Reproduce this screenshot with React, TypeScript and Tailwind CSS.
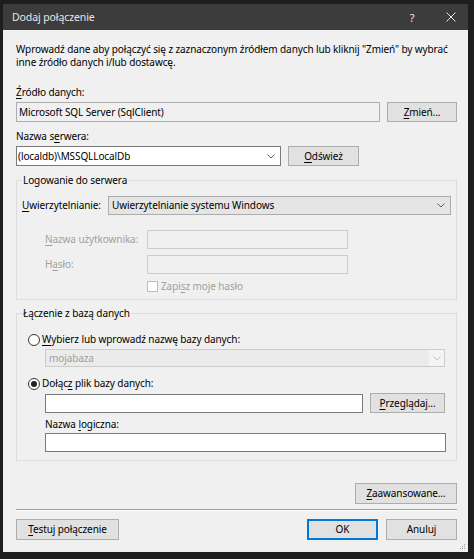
import React from "react";

function U({ children }: { children: React.ReactNode }) {
  return <span className="underline underline-offset-[1.5px] decoration-[1px]">{children}</span>;
}

function Btn({ children, className }: { children: React.ReactNode; className: string }) {
  return (
    <div className={"flex items-center justify-center bg-[#e1e1e1] border border-[#adadad] text-black " + className}>
      <span>{children}</span>
    </div>
  );
}

function Chevron({ color }: { color: string }) {
  return (
    <svg width="8" height="5" viewBox="0 0 8 5" className="shrink-0">
      <path d="M0.5 0.5 L4 4 L7.5 0.5" fill="none" stroke={color} strokeWidth="1" />
    </svg>
  );
}

export default function App() {
  return (
    <div className="w-[474px] h-[559px] bg-[#1e1e1e] pt-[4px] pl-[3px] font-['Noto_Sans',sans-serif] text-[10px] leading-[13px] tracking-[-0.1px] text-black overflow-hidden">
      <div className="relative w-[465px] h-[548px] flex flex-col">
        {/* Title bar */}
        <div className="h-[26px] bg-[#3c3c3c] flex items-center pl-[9px] pr-[7px] text-[#e6e6e6] text-[10.5px]">
          <span>Dodaj połączenie</span>
          <span className="ml-auto w-[20px] text-center text-[11px]">?</span>
          <div className="ml-[19px] w-[20px] flex items-center justify-center">
            <svg width="10" height="10" viewBox="0 0 10 10">
              <path d="M0.5 0.5 L9.5 9.5 M9.5 0.5 L0.5 9.5" stroke="#e6e6e6" strokeWidth="1" />
            </svg>
          </div>
        </div>

        {/* Body */}
        <div className="flex-1 bg-[#f0f0f0] pl-[13px] pr-[11px] pt-[13px] flex flex-col">
          <p className="leading-[12.5px] whitespace-nowrap">
            Wprowadź dane aby połączyć się z zaznaczonym źródłem danych lub kliknij "Zmień" by wybrać
            <br />
            inne źródło danych i/lub dostawcę.
          </p>

          <div className="mt-[18px]">
            <U>Ź</U>ródło danych:
          </div>
          <div className="mt-[3px] flex h-[20px]">
            <div className="w-[364px] h-[20px] border border-[#adadad] bg-[#f0f0f0] flex items-center pl-[2px]">
              Microsoft SQL Server (SqlClient)
            </div>
            <Btn className="ml-auto w-[70px] h-[20px]">
              <U>Z</U>mień...
            </Btn>
          </div>

          <div className="mt-[8px]">
            Nazwa s<U>e</U>rwera:
          </div>
          <div className="mt-[3px] flex h-[20px]">
            <div className="w-[265px] h-[20px] border border-[#7a7a7a] bg-white flex items-center pl-[1px] pr-[5px]">
              <span>(localdb)\MSSQLLocalDb</span>
              <span className="ml-auto">
                <Chevron color="#606060" />
              </span>
            </div>
            <Btn className="ml-[7px] w-[71px] h-[20px]">
              <U>O</U>dśwież
            </Btn>
          </div>

          {/* Group 1 */}
          <fieldset className="mt-[8px] border border-[#dcdcdc] pl-[5px] pr-[5px] pb-[7px] min-w-0">
            <legend className="px-[1px]">Logowanie do serwera</legend>
            <div className="mt-[9px] h-[19px] flex items-center">
              <div className="w-[86px]">
                <U>U</U>wierzytelnianie:
              </div>
              <div className="flex-1 h-[19px] bg-[#e5e5e5] border border-[#acacac] flex items-center pl-[3px] pr-[5px]">
                <span>Uwierzytelnianie systemu Windows</span>
                <span className="ml-auto">
                  <Chevron color="#606060" />
                </span>
              </div>
            </div>
            <div className="mt-[15px] h-[19px] flex items-center text-[#a0a0a0]">
              <div className="w-[125px] pl-[23px]">
                <U>N</U>azwa użytkownika:
              </div>
              <div className="w-[201px] h-[19px] border border-[#cccccc] bg-[#f0f0f0]" />
            </div>
            <div className="mt-[6px] h-[19px] flex items-center text-[#a0a0a0]">
              <div className="w-[125px] pl-[23px]">
                H<U>a</U>sło:
              </div>
              <div className="w-[201px] h-[19px] border border-[#cccccc] bg-[#f0f0f0]" />
            </div>
            <div className="mt-[7px] h-[11px] flex items-center pl-[125px] text-[#a0a0a0]">
              <div className="w-[11px] h-[11px] border border-[#bcbcbc] bg-white shrink-0" />
              <span className="ml-[3px]">
                Zapi<U>s</U>z moje hasło
              </span>
            </div>
          </fieldset>

          {/* Group 2 */}
          <fieldset className="mt-[7px] border border-[#dcdcdc] pl-[5px] pr-[5px] pb-[8px] min-w-0">
            <legend className="px-[1px]">Łączenie z bazą danych</legend>
            <div className="mt-[13px] h-[13px] flex items-center pl-[6px]">
              <div className="w-[12px] h-[12px] rounded-full border border-[#333333] bg-white shrink-0" />
              <span className="ml-[2px]">
                <U>W</U>ybierz lub wprowadź nazwę bazy danych:
              </span>
            </div>
            <div className="mt-[3px] ml-[23px] w-[400px] h-[18px] border border-[#cccccc] bg-[#ebebeb] flex items-center text-[#a0a0a0]">
              <span className="pl-[3px]">mojabaza</span>
              <div className="ml-auto w-[15px] h-full bg-[#f4f4f4] flex items-center justify-center">
                <Chevron color="#c0c0c0" />
              </div>
            </div>
            <div className="mt-[10px] h-[13px] flex items-center pl-[6px]">
              <div className="w-[12px] h-[12px] rounded-full border border-[#333333] bg-white shrink-0 flex items-center justify-center">
                <div className="w-[6px] h-[6px] rounded-full bg-[#222222]" />
              </div>
              <span className="ml-[2px]">
                Dołąc<U>z</U> plik bazy danych:
              </span>
            </div>
            <div className="mt-[3px] ml-[23px] w-[400px] h-[20px] flex items-end">
              <div className="w-[318px] h-[19px] border border-[#7a7a7a] bg-white" />
              <Btn className="ml-auto w-[75px] h-[20px]">
                <U>P</U>rzeglądaj...
              </Btn>
            </div>
            <div className="mt-[5px] ml-[23px]">
              Nazwa <U>l</U>ogiczna:
            </div>
            <div className="mt-[2px] ml-[23px] w-[401px] h-[19px] border border-[#7a7a7a] bg-white" />
          </fieldset>

          <Btn className="mt-[22px] self-end w-[102px] h-[21px]">
            <U>Z</U>aawansowane...
          </Btn>

          <div className="mt-[5px] h-[2px] border-t border-t-[#a0a0a0] border-b border-b-white" />

          <div className="mt-[8px] flex h-[21px]">
            <Btn className="w-[103px] h-[21px]">
              <U>T</U>estuj połączenie
            </Btn>
            <div className="ml-auto w-[71px] h-[21px] flex items-center justify-center bg-[#e1e1e1] border border-[#0078d7] shadow-[inset_0_0_0_1px_#0078d7]">
              OK
            </div>
            <Btn className="ml-[8px] w-[71px] h-[21px]">Anuluj</Btn>
          </div>
        </div>

        <svg className="absolute right-[2px] bottom-[2px]" width="6" height="6" viewBox="0 0 6 6">
          <rect x="4" y="0" width="1" height="1" fill="#a0a0a0" />
          <rect x="2" y="2" width="1" height="1" fill="#a0a0a0" />
          <rect x="4" y="2" width="1" height="1" fill="#a0a0a0" />
          <rect x="0" y="4" width="1" height="1" fill="#a0a0a0" />
          <rect x="2" y="4" width="1" height="1" fill="#a0a0a0" />
          <rect x="4" y="4" width="1" height="1" fill="#a0a0a0" />
        </svg>
      </div>
    </div>
  );
}
